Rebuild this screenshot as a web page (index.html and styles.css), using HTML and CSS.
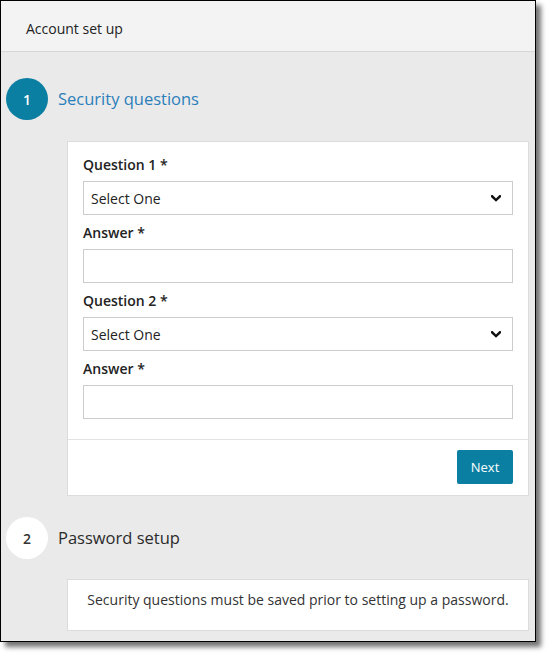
FILE: index.html
```html
<!DOCTYPE html>
<html lang="en">
<head>
<meta charset="utf-8">
<title>Account set up</title>
<link rel="stylesheet" href="styles.css">
</head>
<body>
<div class="frame">
  <header class="topbar">Account set up</header>
  <main class="content">
    <section class="step">
      <div class="step-head">
        <span class="badge badge-active">1</span>
        <h2 class="step-title step-title-active">Security questions</h2>
      </div>
      <div class="card">
        <div class="card-body">
          <label class="label">Question 1 *</label>
          <div class="select">
            <span>Select One</span>
            <svg class="chev" viewBox="0 0 10 7" width="10" height="7"><path d="M1 1.2 L5 5 L9 1.2" fill="none" stroke="#111" stroke-width="2.4" stroke-linecap="square"/></svg>
          </div>
          <label class="label">Answer *</label>
          <div class="input"></div>
          <label class="label">Question 2 *</label>
          <div class="select">
            <span>Select One</span>
            <svg class="chev" viewBox="0 0 10 7" width="10" height="7"><path d="M1 1.2 L5 5 L9 1.2" fill="none" stroke="#111" stroke-width="2.4" stroke-linecap="square"/></svg>
          </div>
          <label class="label">Answer *</label>
          <div class="input"></div>
        </div>
        <div class="card-footer">
          <button class="btn">Next</button>
        </div>
      </div>
    </section>
    <section class="step step-2">
      <div class="step-head">
        <span class="badge badge-idle">2</span>
        <h2 class="step-title">Password setup</h2>
      </div>
      <div class="card card-note">
        <p class="note">Security questions must be saved prior to setting up a password.</p>
      </div>
    </section>
  </main>
</div>
</body>
</html>
```

FILE: styles.css
```css
* { box-sizing: border-box; }
html, body { margin: 0; padding: 0; background: #ffffff; }
body {
  font-family: "Open Sans", "Noto Sans", sans-serif;
  color: #333;
  width: 551px;
  height: 658px;
}
.frame {
  width: 536px;
  height: 642px;
  border: 1px solid #000;
  background: #eaeaea;
  box-shadow: 5px 5px 5px rgba(0,0,0,0.55);
  display: flex;
  flex-direction: column;
  overflow: hidden;
}
.topbar {
  height: 51px;
  flex: none;
  background: #f3f3f3;
  border-bottom: 1px solid #d6d6d6;
  padding-left: 25px;
  display: flex;
  align-items: center;
  font-size: 14px;
  color: #222;
  padding-top: 5px;
}
.content {
  padding: 26px 6px 0 5px;
}
.step-head {
  display: flex;
  align-items: center;
  gap: 10px;
}
.badge {
  width: 42px;
  height: 42px;
  border-radius: 50%;
  display: flex;
  align-items: center;
  justify-content: center;
  font-size: 14px;
  font-weight: 600;
  flex: none;
}
.badge-active { background: #0b7fa2; color: #fff; }
.badge-idle { background: #fff; color: #333; }
.step-title {
  margin: 0;
  font-size: 16.5px;
  font-weight: 500;
  line-height: 22px;
  color: #2b2b2b;
}
.step-title-active { color: #2a7fbb; }
.card {
  margin: 21px 0 0 61px;
  background: #fff;
  border: 1px solid #dcdcdc;
}
.card-body {
  padding: 13px 15px 20px 15px;
}
.label {
  display: block;
  font-size: 14px;
  font-weight: 600;
  line-height: 20px;
  color: #222;
  margin-bottom: 6px;
}
.select, .input {
  height: 34px;
  border: 1px solid #ccc;
  background: #fff;
  margin-bottom: 8px;
}
.select {
  display: flex;
  align-items: center;
  justify-content: space-between;
  padding: 0 11px 0 7px;
  font-size: 14px;
  color: #222;
}
.card-body > :last-child { margin-bottom: 0; }
.chev { display: block; }
.card-footer {
  border-top: 1px solid #e3e3e3;
  padding: 10px 15px 11px;
  display: flex;
  justify-content: flex-end;
}
.btn {
  width: 56px;
  height: 34px;
  border: none;
  border-radius: 2px;
  background: #0b7fa2;
  color: #fff;
  font-family: inherit;
  font-size: 13px;
  padding: 0;
}
.step-2 { margin-top: 21px; }
.card-note {
  margin-top: 20px;
  padding: 10px 15px 20px;
}
.note {
  margin: 0;
  text-align: center;
  font-size: 14px;
  line-height: 20px;
  color: #333;
}
```
